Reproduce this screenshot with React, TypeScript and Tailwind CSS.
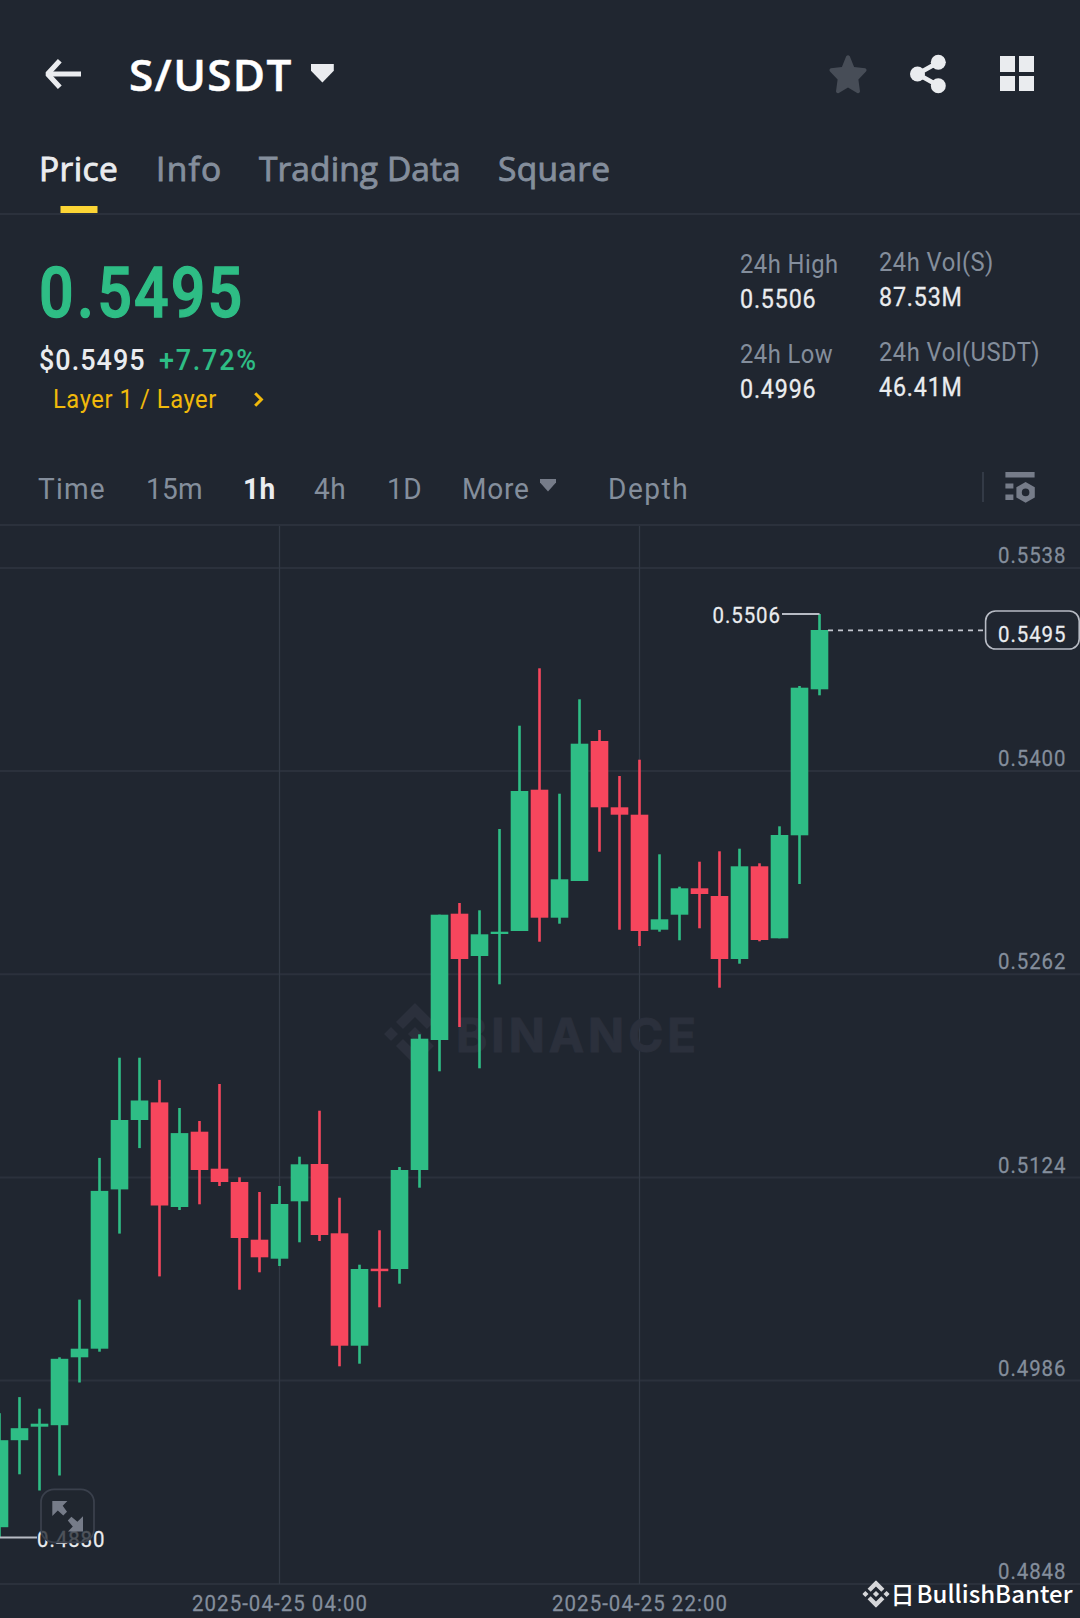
import { useState } from "react";
import { SiBinance } from "react-icons/si";

type Candle = {
  up: boolean;
  top: number;
  bottom: number;
  high: number;
  low: number;
};

const GREEN = "#2ebd85";
const RED = "#f6465d";

// [direction, body top, body bottom, high, low]
const RAW_CANDLES: [number, number, number, number, number][] = [
  [1, 1440.2, 1527.2, 1413.2, 1537.4],
  [1, 1428.2, 1440.2, 1397.1, 1474.3],
  [1, 1423.7, 1426.7, 1408.7, 1490.5],
  [1, 1358.8, 1425.2, 1357.3, 1475.5],
  [1, 1348.7, 1357.3, 1299.6, 1382.5],
  [1, 1190.9, 1348.7, 1157.9, 1351.7],
  [1, 1120, 1189.4, 1057.7, 1233.6],
  [1, 1100.5, 1120, 1057.7, 1148.1],
  [0, 1102.4, 1205.5, 1079.9, 1276.4],
  [1, 1133.1, 1207, 1108, 1210],
  [0, 1131.7, 1170, 1121, 1204.3],
  [0, 1168.7, 1182, 1084, 1186],
  [0, 1182, 1238, 1177.3, 1289.7],
  [0, 1239.7, 1257.3, 1192, 1272.3],
  [1, 1204, 1258.7, 1186, 1266],
  [1, 1164.3, 1201.3, 1156.7, 1242.3],
  [0, 1164, 1235, 1110.7, 1241],
  [0, 1233.3, 1345.7, 1197.7, 1366.3],
  [1, 1269, 1345.7, 1264.7, 1363.7],
  [0, 1268.7, 1271.2, 1230.3, 1307.3],
  [1, 1170, 1269, 1167, 1283.7],
  [1, 1038.7, 1170, 1034.3, 1187.7],
  [1, 914.7, 1040, 914.7, 1071.3],
  [0, 913.7, 959, 903, 1027],
  [1, 934.3, 956, 910.3, 1068.3],
  [1, 931.7, 934, 829, 984.3],
  [1, 791, 931, 725.7, 931],
  [0, 789.7, 917.7, 668.3, 941.7],
  [1, 879.3, 917.7, 793.7, 923.7],
  [1, 743.7, 881, 699.3, 881],
  [0, 741, 807.3, 730, 851.7],
  [0, 807.3, 814.7, 776, 929.7],
  [0, 814.7, 931, 759.7, 946],
  [1, 919.3, 929.7, 854.3, 931.7],
  [1, 888.3, 914.7, 886.7, 940.3],
  [0, 888.3, 894, 861.7, 928.3],
  [0, 896, 959, 851.3, 987.7],
  [1, 866.3, 959, 848.7, 963.7],
  [0, 866.3, 940, 863.3, 941.3],
  [1, 835, 938.3, 826.3, 938.3],
  [1, 687.7, 835.3, 686, 884],
  [1, 630, 689.3, 614, 695.3],
];

const CANDLES: Candle[] = RAW_CANDLES.map(([up, top, bottom, high, low]) => ({
  up: up === 1,
  top,
  bottom,
  high,
  low,
}));

const GRID = [
  { y: 568, label: "0.5538" },
  { y: 771, label: "0.5400" },
  { y: 974.3, label: "0.5262" },
  { y: 1177.6, label: "0.5124" },
  { y: 1380.6, label: "0.4986" },
  { y: 1584, label: "0.4848" },
];

const TABS = [
  { name: "Price", style: "w-[117px] tracking-[0.4px]" },
  { name: "Info", style: "w-[103px] tracking-[1.3px]" },
  { name: "Trading Data", style: "w-[239px] tracking-[0.1px]" },
  { name: "Square", style: "w-[140px] tracking-[0.3px]" },
];

const INTERVALS = [
  { name: "Time", style: "w-[108px] tracking-[1.3px]" },
  { name: "15m", style: "w-[97px] tracking-[0.3px]" },
  { name: "1h", style: "w-[71px] tracking-[0.4px]" },
  { name: "4h", style: "w-[73px] tracking-[0.4px]" },
  { name: "1D", style: "w-[75px] tracking-[0.4px]" },
];

function Header() {
  return (
    <header className="flex h-[147px] items-center pr-[46px] pl-[44px]">
      <svg width="38" height="32" viewBox="0 0 38 32" fill="none" stroke="#eaecef" className="mt-px shrink-0">
        <path d="M37 16H4" strokeWidth="5.2" />
        <path d="M15.8 2.8L3.6 16l12.2 13.2" strokeWidth="5.2" strokeLinejoin="bevel" />
      </svg>
      <h1 className="ml-[47px] w-[183px] text-[44px] leading-none font-semibold tracking-[1.4px] text-white [-webkit-text-stroke:0.5px]">
        S/USDT
      </h1>
      <svg width="23" height="19" viewBox="0 0 23 19" fill="#eaecef" className="-ml-px">
        <path d="M0 0h22.8v6.7L11.4 18.5 0 6.7z" />
      </svg>
      <div className="ml-auto flex items-center">
        <svg width="38" height="39" viewBox="0 0 38 39" fill="#474d57" className="mt-[2px]">
          <path d="M17.2 1.2Q19 -.6 20.8 1.2L25.1 12 36.2 13.2Q38.4 14.4 37 16.6L29.4 24.6 31 36.6Q30.4 38.8 28.2 38L19 32.6 9.8 38Q7.6 38.8 7 36.6L8.6 24.6 1 16.6Q-.4 14.4 1.8 13.2L12.9 12z" />
        </svg>
        <svg width="36" height="40" viewBox="0 0 36 40" fill="#eaecef" stroke="#eaecef" className="ml-[43px]">
          <path d="M28.5 8.2L7.5 20l21 11.8" strokeWidth="4.6" fill="none" />
          <circle cx="28.3" cy="8.2" r="7.5" stroke="none" />
          <circle cx="7.5" cy="20" r="7.5" stroke="none" />
          <circle cx="28.3" cy="31.8" r="7.5" stroke="none" />
        </svg>
        <div className="ml-[54px] grid grid-cols-2 gap-1">
          <i className="h-[15.5px] w-[15px] bg-[#eaecef]" />
          <i className="h-[15.5px] w-[15px] bg-[#eaecef]" />
          <i className="h-[15.5px] w-[15px] bg-[#eaecef]" />
          <i className="h-[15.5px] w-[15px] bg-[#eaecef]" />
        </div>
      </div>
    </header>
  );
}

function Stat({ label, value }: { label: string; value: string }) {
  return (
    <div className="text-[25px] leading-[35px] whitespace-nowrap">
      <div className="origin-left scale-x-[.95] tracking-[0.5px] text-[#848e9c]">{label}</div>
      <div className="origin-left scale-x-[.93] tracking-[0.9px] text-[#eaecef] [-webkit-text-stroke:0.3px]">
        {value}
      </div>
    </div>
  );
}

function Summary() {
  return (
    <section className="flex h-[237px] font-[Roboto,sans-serif]">
      <div className="w-[740px] pt-[43px] pl-[39px]">
        <div className="origin-left scale-x-[.87] text-[70px] leading-[70px] font-medium tracking-[2.4px] text-[#2ebd85] [-webkit-text-stroke:1.4px]">
          0<span className="mx-[1.5px]">.</span>5495
        </div>
        <div className="mt-3 flex text-[29px] leading-[40px] font-medium">
          <span className="w-[120px] origin-left scale-x-[.93] tracking-[1.1px] text-[#eaecef]">$0.5495</span>
          <span className="origin-left scale-x-[.93] tracking-[1.9px] text-[#2ebd85]">+7.72%</span>
        </div>
        <div className="flex items-center pt-px pl-[14px] text-[25px] leading-[38px] text-[#f0b90b]">
          <span className="w-[201px] origin-left scale-x-[.95] tracking-[0.6px]">Layer 1 / Layer</span>
          <svg width="10" height="15" viewBox="0 0 10 15" fill="none" stroke="#f0b90b" strokeWidth="3" className="-mt-[2px]">
            <path d="M1.2 1.2l6.2 6.3-6.2 6.3" />
          </svg>
        </div>
      </div>
      <div className="w-[139px] space-y-[20px] pt-8">
        <Stat label="24h High" value="0.5506" />
        <Stat label="24h Low" value="0.4996" />
      </div>
      <div className="space-y-[20px] pt-[30px]">
        <Stat label="24h Vol(S)" value="87.53M" />
        <Stat label="24h Vol(USDT)" value="46.41M" />
      </div>
    </section>
  );
}

// narrow digits with open spacing; width is the final advance on the chart
function Num({ x, y, width, fill, children }: { x: number; y: number; width: number; fill: string; children: string }) {
  return (
    <text
      transform={`translate(${x} ${y}) scale(.92 1)`}
      textLength={width / 0.92}
      fill={fill}
      stroke={fill}
      strokeWidth="0.25"
    >
      {children}
    </text>
  );
}

function Chart() {
  return (
    <svg
      width="1080"
      height="1092"
      viewBox="0 526 1080 1092"
      className="block font-[Roboto,sans-serif]"
      fontSize="22.2"
    >
      <g stroke="#2b313c" strokeWidth="2">
        {GRID.map((g) => (
          <path key={g.label} d={`M0 ${g.y}H1080`} />
        ))}
      </g>
      <path d="M279.5 526V1584M639.5 526V1584" stroke="#333a46" strokeWidth="1.3" />

      <SiBinance x="384" y="1003" size="62" color="#2b303c" />
      <text
        x="456"
        y="1051.5"
        fontSize="47.3"
        textLength="240"
        fill="#2b303c"
        stroke="#2b303c"
        className="font-[Inter,sans-serif] font-bold"
      >
        BINANCE
      </text>

      {CANDLES.map((c, i) => {
        const x = i * 20 - 0.5;
        return (
          <g key={i} fill={c.up ? GREEN : RED}>
            <rect x={x - 1.3} y={c.high} width="2.6" height={c.low - c.high} />
            <rect x={x - 8.8} y={c.top} width="17.6" height={c.bottom - c.top} />
          </g>
        );
      })}

      {GRID.map((g) => (
        <Num key={g.label} x={998} y={g.y - 5} width={67.5} fill="#848e9c">
          {g.label}
        </Num>
      ))}
      <Num x={192} y={1611.3} width={175} fill="#848e9c">
        2025-04-25 04:00
      </Num>
      <Num x={552} y={1611.3} width={175} fill="#848e9c">
        2025-04-25 22:00
      </Num>

      {/* session high / low markers */}
      <path d="M782 614H819.5M0 1537.5H37" stroke="#b7bbc4" strokeWidth="1.8" />
      <Num x={712.5} y={622.5} width={67.5} fill="#eaecef">
        0.5506
      </Num>
      <Num x={37} y={1546.7} width={67.5} fill="#eaecef">
        0.4880
      </Num>

      {/* last price */}
      <path d="M828 630.3H984" stroke="#c3c6ce" strokeWidth="1.8" strokeDasharray="5 5" />
      <rect x="985.6" y="611" width="93.6" height="38" rx="10" fill="#202630" stroke="#b7bbc4" strokeWidth="1.6" />
      <Num x={998} y={641.7} width={67.5} fill="#eaecef">
        0.5495
      </Num>

      {/* fullscreen button */}
      <rect
        x="41"
        y="1489.3"
        width="53"
        height="53"
        rx="13"
        fill="#202630"
        fillOpacity="0.78"
        stroke="#3a404c"
        strokeWidth="1.8"
      />
      <g fill="#767c89">
        <path d="M52.3 1501H67.4L62.7 1505.8 67 1511.8 63.3 1515.6 57.8 1510.6 52.3 1516z" />
        <path d="M83 1531.4H68L72.8 1526.6 67.8 1520.6 71.4 1516.8 77.4 1521.8 83 1516.2z" />
      </g>

      <SiBinance x="862.3" y="1580.3" size="27.4" color="#d5d6d9" />
      <g fill="#ffffff" className="font-['Noto_Sans_CJK_SC',sans-serif] font-medium">
        <text x="890.5" y="1604" fontSize="24">
          日
        </text>
        <text x="916.5" y="1602.5" fontSize="24" textLength="156">
          BullishBanter
        </text>
      </g>
    </svg>
  );
}

export default function App() {
  const [tab, setTab] = useState("Price");
  const [interval, setInterval] = useState("1h");

  return (
    <div className="h-[1618px] w-[1080px] overflow-hidden bg-[#202630] font-['Open_Sans',sans-serif]">
      <Header />

      <nav className="flex h-[68px] border-b-2 border-[#2b313c] pl-[39px] text-[33.5px] leading-[43px] [-webkit-text-stroke:0.9px]">
        {TABS.map((t) => (
          <button key={t.name} onClick={() => setTab(t.name)} className={`${t.style} flex text-left`}>
            <span
              className={`relative h-[66px] whitespace-nowrap ${tab === t.name ? "text-[#eaecef]" : "text-[#848e9c]"}`}
            >
              {t.name}
              {tab === t.name && (
                <i className="absolute bottom-0 left-1/2 h-[7px] w-[37px] -translate-x-1/2 bg-[#fcd535]" />
              )}
            </span>
          </button>
        ))}
      </nav>

      <Summary />

      <div className="flex h-[74px] items-center border-b-2 border-[#2b313c] pt-[2px] pr-[45px] pl-[38px] font-[Roboto,sans-serif] text-[29.5px] text-[#848e9c]">
        {INTERVALS.map((t) => (
          <button
            key={t.name}
            onClick={() => setInterval(t.name)}
            className={`${t.style} origin-left scale-x-[.95] text-left ${interval === t.name ? "font-bold text-[#eaecef]" : ""}`}
          >
            {t.name}
          </button>
        ))}
        <button className="flex w-[146px] items-center">
          <span className="w-[78px] origin-left scale-x-[.95] text-left tracking-[0.8px]">More</span>
          <svg width="16" height="13" viewBox="0 0 16 13" fill="#767c89" className="-mt-[7px]">
            <path d="M0 0h16v3.6L8 12.5 0 3.6z" />
          </svg>
        </button>
        <button className="origin-left scale-x-[.95] tracking-[1.6px]">Depth</button>
        <i className="-mt-[4px] ml-auto h-[30px] w-[2.5px] bg-[#333a46]" />
        <svg width="30" height="31" viewBox="0 0 30 31" fill="#767c89" className="-mt-[4px] ml-[21px]">
          <path d="M.4 0H29.6V5.6H.4zM.4 11.4H8.4V16.6H.4zM.4 22.6H8.4V28H.4z" />
          <path
            fillRule="evenodd"
            d="M20.6 10L29.8 15.2V25.6L20.6 30.8 11.4 25.6V15.2zM20.6 16.6a3.8 3.8 0 1 0 0 7.6 3.8 3.8 0 0 0 0-7.6z"
          />
        </svg>
      </div>

      <Chart />
    </div>
  );
}
